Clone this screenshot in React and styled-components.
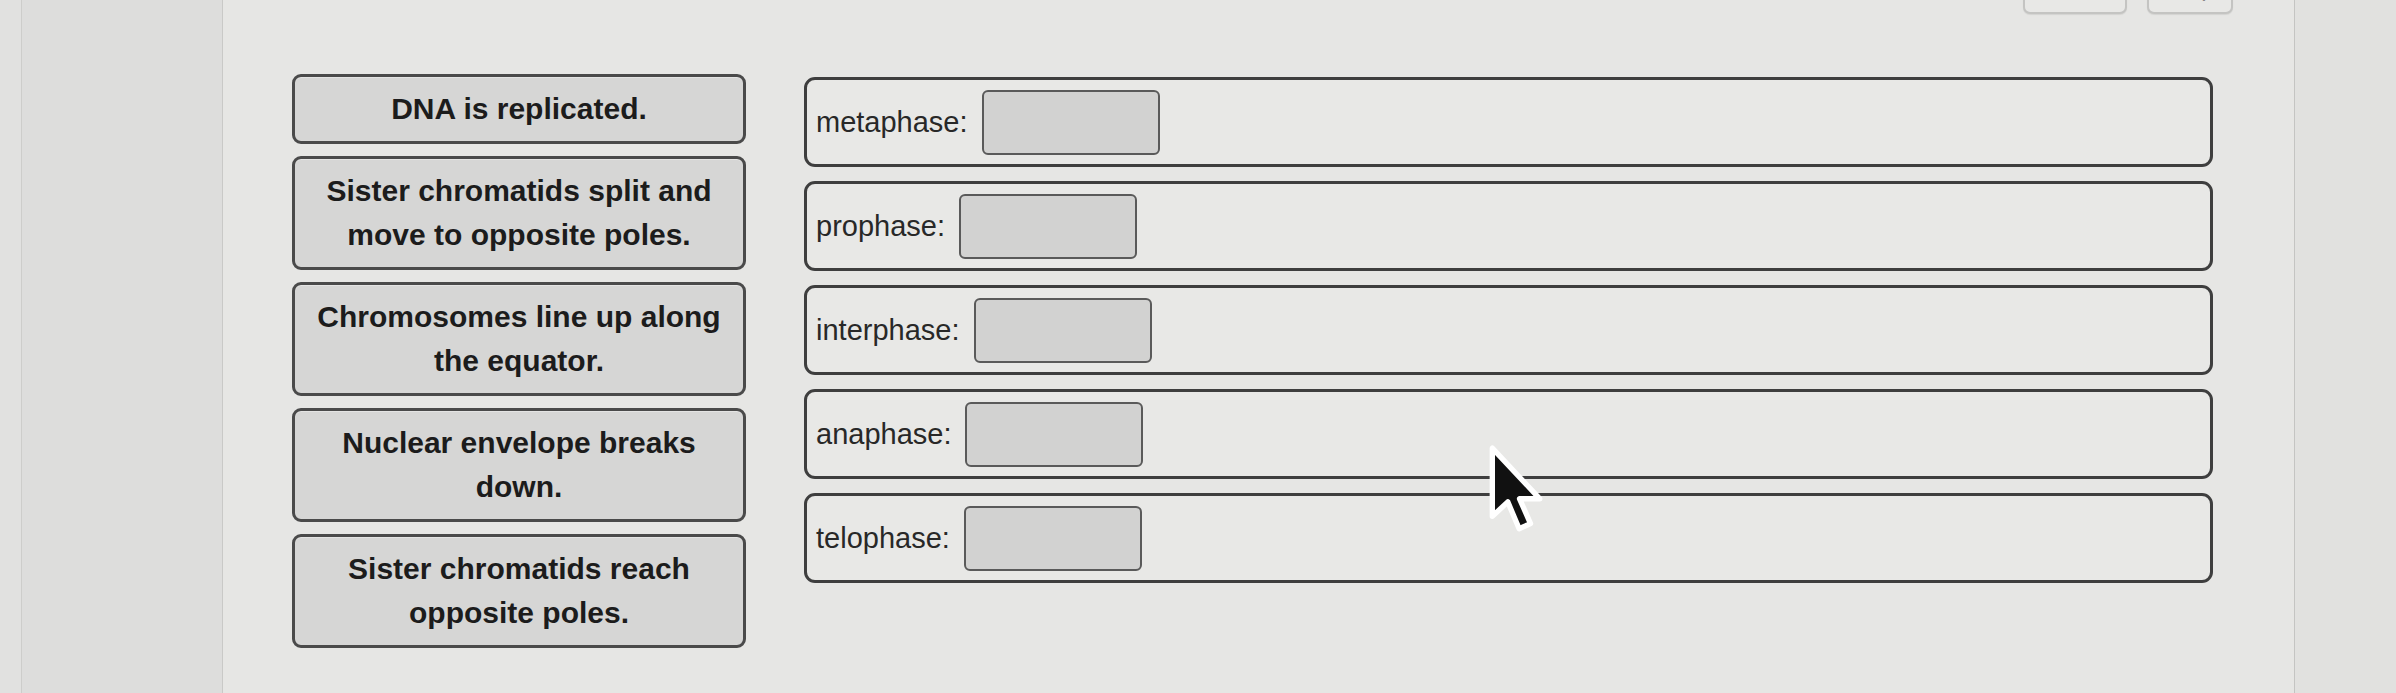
import React from "react";
import styled, { createGlobalStyle } from "styled-components";

const Global = createGlobalStyle`
  html, body { margin: 0; padding: 0; }
  body { font-family: "Liberation Sans", Arial, sans-serif; background: #e2e2e0; }
  #root { width: 2396px; height: 693px; overflow: hidden; }
`;

const Page = styled.div`
  position: relative;
  display: flex;
  width: 2396px;
  height: 693px;
  background: #e3e3e1;
`;

const EdgeStrip = styled.div`
  width: 21px;
  flex: none;
  background: #e1e1e0;
  border-right: 1px solid #cdcdcb;
`;

const Sidebar = styled.div`
  width: 200px;
  flex: none;
  background: #dddddc;
  border-right: 1px solid #c9c9c7;
`;

const Main = styled.main`
  flex: 1;
  display: flex;
  flex-direction: column;
  background: #e6e6e4;
  border-right: 1px solid #c4c4c2;
  padding-left: 69px;
`;

const RightArea = styled.div`
  width: 101px;
  flex: none;
  background: #e1e1df;
`;

const TopBar = styled.div`
  display: flex;
  justify-content: flex-end;
  gap: 20px;
  height: 14px;
  padding-right: 61px;
`;

const TopButton = styled.div`
  display: flex;
  justify-content: center;
  align-items: flex-start;
  width: ${(p) => p.$w}px;
  height: 50px;
  margin-top: -36px;
  border: 2px solid #c4c4c2;
  border-radius: 7px;
  background: #e8e8e6;
  color: #8a8a8a;
  font-size: 24px;
  line-height: 24px;
  padding-top: 10px;
  box-sizing: border-box;
  box-shadow: 0 1px 1px rgba(0,0,0,0.08);
`;

const Content = styled.div`
  display: flex;
  gap: 58px;
  margin-top: 60px;
`;

const CardColumn = styled.div`
  width: 454px;
  flex: none;
  display: flex;
  flex-direction: column;
  gap: 12px;
`;

const Card = styled.div`
  box-sizing: border-box;
  border: 3px solid #4a4a4a;
  border-radius: 9px;
  background: #d6d6d5;
  padding: 10px 15px;
  text-align: center;
  font-weight: 700;
  font-size: 30px;
  line-height: 44px;
  color: #1c1c1c;
  box-shadow: inset 0 1px 0 rgba(255,255,255,0.35);
`;

const RowColumn = styled.div`
  width: 1409px;
  flex: none;
  display: flex;
  flex-direction: column;
  gap: 14px;
  padding-top: 3px;
`;

const Row = styled.div`
  box-sizing: border-box;
  height: 90px;
  display: flex;
  align-items: center;
  gap: 14px;
  border: 3px solid #3e3e3e;
  border-radius: 11px;
  background: #e8e8e6;
  padding-left: 9px;
`;

const Label = styled.span`
  font-size: 29px;
  color: #282828;
`;

const DropBox = styled.div`
  box-sizing: border-box;
  width: 178px;
  height: 65px;
  border: 2.5px solid #5a5a5a;
  border-radius: 6px;
  background: #d2d2d1;
`;

const Cursor = styled.svg`
  position: absolute;
  left: 1484px;
  top: 442px;
  width: 60px;
  height: 95px;
`;

const cards = [
  "DNA is replicated.",
  "Sister chromatids split and move to opposite poles.",
  "Chromosomes line up along the equator.",
  "Nuclear envelope breaks down.",
  "Sister chromatids reach opposite poles.",
];

const phases = ["metaphase:", "prophase:", "interphase:", "anaphase:", "telophase:"];

export default function App() {
  return (
    <>
      <Global />
      <Page>
        <EdgeStrip />
        <Sidebar />
        <Main>
          <TopBar>
            <TopButton $w={104}>Reset</TopButton>
            <TopButton $w={86}>Help</TopButton>
          </TopBar>
          <Content>
            <CardColumn>
              {cards.map((c) => (
                <Card key={c}>{c}</Card>
              ))}
            </CardColumn>
            <RowColumn>
              {phases.map((p) => (
                <Row key={p}>
                  <Label>{p}</Label>
                  <DropBox />
                </Row>
              ))}
            </RowColumn>
          </Content>
        </Main>
        <RightArea />
        <Cursor viewBox="0 0 29 46">
          <path
            d="M4 3 L4 36 L11.5 29 L17 42 L22.5 39.5 L17.2 27.5 L27 27.5 Z"
            fill="#111"
            stroke="#fff"
            strokeWidth="2.6"
            strokeLinejoin="round"
          />
        </Cursor>
      </Page>
    </>
  );
}
